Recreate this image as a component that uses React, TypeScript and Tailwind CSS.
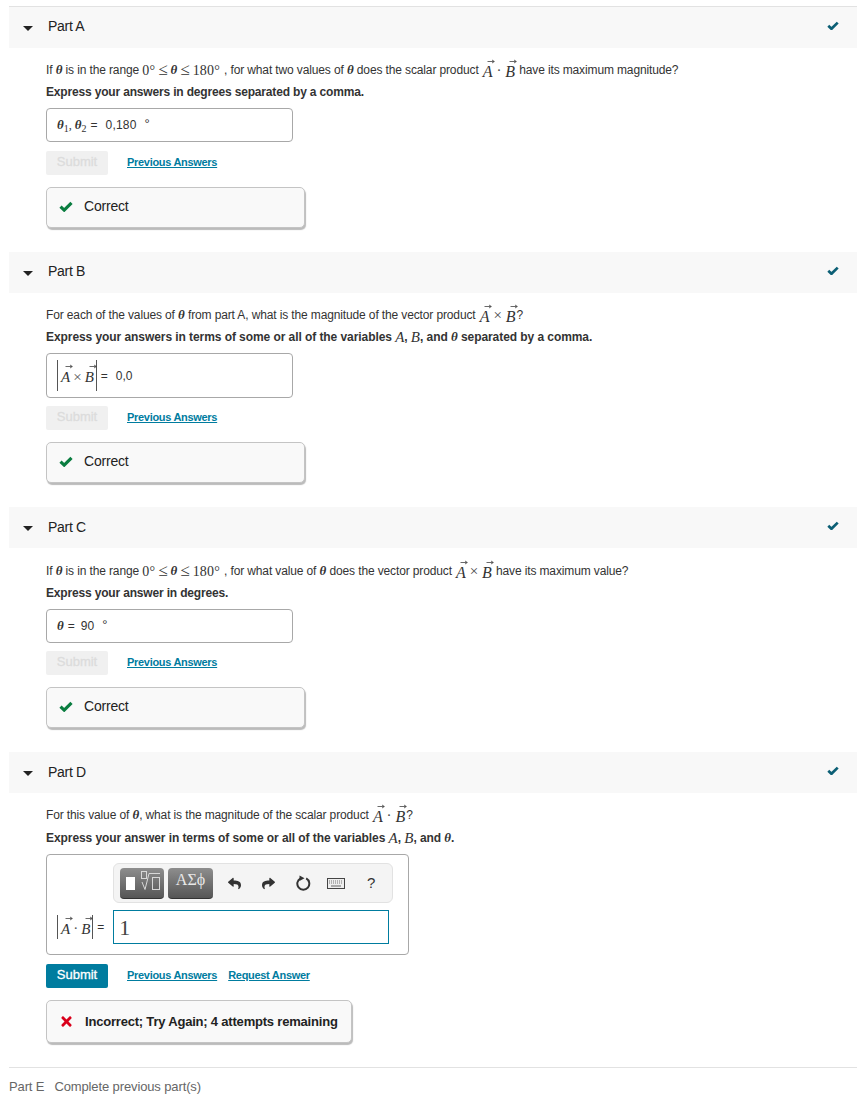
import React from "react";
import { FaTimes, FaReply, FaShare } from "react-icons/fa";

const Vec = ({ c, small }: { c: string; small?: boolean }) => (
  <span
    className={
      small
        ? "relative inline-block font-['Liberation_Serif',serif] italic text-[15px] leading-[12px] text-[#333]"
        : "relative inline-block font-['Liberation_Serif',serif] italic text-[16px] leading-[12px] text-[#333] mx-[1px] mt-[3px]"
    }
  >
    {c}
    <svg className="absolute left-[4px] top-[-7px]" width="8" height="5" viewBox="0 0 8 5">
      <path d="M0.5 2.5H7M5 1L7.4 2.5L5 4" fill="none" stroke="#444" strokeWidth="0.8" />
    </svg>
  </span>
);
const Th = () => <span className="font-['Liberation_Serif',serif] italic font-bold text-[13px] tracking-normal text-[#333]">θ</span>;
const V = ({ c }: { c: string }) => <span className="font-['Liberation_Serif',serif] italic font-normal text-[15px] tracking-normal text-[#333]">{c}</span>;
const Op = ({ c, small }: { c: string; small?: boolean }) => (
  <span className={small ? "font-['Liberation_Serif',serif] text-[15px] text-[#555] mx-[3px]" : "font-['Liberation_Serif',serif] text-[15px] text-[#444] mx-[3px]"}>{c}</span>
);

const Range = () => (
  <>
    <span className="font-['Liberation_Serif',serif] text-[14px] tracking-[0.2px]">0°</span>
    <span className="mx-[3px] font-['Liberation_Serif',serif] text-[17px] tracking-normal">≤</span>
    <Th />
    <span className="mx-[3px] font-['Liberation_Serif',serif] text-[17px] tracking-normal">≤</span>
    <span className="font-['Liberation_Serif',serif] text-[14px] tracking-[0.2px] mr-[4px]">180°</span>
  </>
);

const Check = ({ color, w }: { color: string; w: number }) => (
  <svg width={w} height={w * 0.8} viewBox="0 0 14 11" className={color}>
    <path d="M1.5 5.5L5.2 9L12.5 1.8" fill="none" stroke="currentColor" strokeWidth="3.2" />
  </svg>
);

const Header = ({ name, low }: { name: string; low?: boolean }) => (
  <div className="h-[41px] bg-[#f8f8f8] flex items-center pl-[14px] pr-[18px]">
    <svg width="10" height="5" viewBox="0 0 10 5" className="mr-[15px] mt-[1px]">
      <path d="M0 0H10L5 5Z" fill="#222" />
    </svg>
    <span className={low ? "text-[14px] tracking-[-0.3px] text-[#222] flex-1" : "text-[14px] tracking-[-0.3px] text-[#222] flex-1 mt-[-2px]"}>{name}</span>
    <div className="mb-[4px] flex">
      <Check color="text-[#0c5f75]" w={12} />
    </div>
  </div>
);

const Links = ({ req }: { req?: boolean }) => (
  <div className="flex gap-[11px] text-[11px] tracking-[-0.3px] font-bold text-[#007c9f] underline ml-[19px] mt-[-1px]">
    <span>Previous Answers</span>
    {req && <span>Request Answer</span>}
  </div>
);

const Actions = ({ active, req, mt }: { active?: boolean; req?: boolean; mt: string }) => (
  <div className={`flex items-center ${mt}`}>
    <div
      className={
        active
          ? "w-[62px] h-[24px] rounded-[2px] bg-[#007c9f] text-white text-[13px] [-webkit-text-stroke:0.3px] flex items-center justify-center pb-[2px]"
          : "w-[62px] h-[24px] rounded-[2px] bg-[#f0f0f0] text-[#dcdcdc] text-[13px] [-webkit-text-stroke:0.3px] flex items-center justify-center pb-[2px]"
      }
    >
      Submit
    </div>
    <Links req={req} />
  </div>
);

const Correct = ({ mt }: { mt: string }) => (
  <div className={`w-[259px] h-[41px] bg-[#f9f9f9] border border-[#c4c4c4] rounded-[5px] shadow-[1px_2px_1px_#bbb] flex items-center pl-[12px] pb-[2px] ${mt}`}>
    <div className="mr-[11px] flex">
      <Check color="text-[#0a7d40]" w={14} />
    </div>
    <span className="text-[14px] tracking-[-0.2px] text-[#222]">Correct</span>
  </div>
);

const Answer = ({ h, children }: { h: string; children: React.ReactNode }) => (
  <div className={`w-[247px] ${h} border border-[#a8a8a8] rounded-[4px] bg-white flex items-center pl-[10px] text-[12px] text-[#333]`}>
    {children}
  </div>
);

const Abs = ({ op, h }: { op: string; h: string }) => (
  <span className={`inline-flex items-center border-l border-r border-[#555] ${h} pl-[3px] pr-[2px] pt-[3px]`}>
    <Vec c="A" small />
    <Op c={op} small />
    <Vec c="B" small />
  </span>
);

const Q = ({ children }: { children: React.ReactNode }) => (
  <div className="text-[12px] tracking-[-0.13px] text-[#333] h-[16px] flex items-center whitespace-pre">{children}</div>
);
const E = ({ children, cls }: { children: React.ReactNode; cls?: string }) => (
  <div className={`text-[12px] font-bold text-[#333] h-[16px] flex items-center whitespace-pre ${cls ?? "mt-[6px] tracking-[-0.17px]"}`}>{children}</div>
);

const Sub = ({ n }: { n: string }) => (
  <span className="font-['Liberation_Serif',serif] text-[13px]">
    <span className="italic font-bold">θ</span>
    <sub className="text-[10px] not-italic">{n}</sub>
  </span>
);

const TB = ({ w, children }: { w: string; children: React.ReactNode }) => (
  <div className={`${w} h-[31px] rounded-[4px] bg-gradient-to-b from-[#8e8e8e] to-[#565656] border-b border-[#333] flex items-center justify-center`}>
    {children}
  </div>
);

const Deg = () => <span className="ml-[8px] mb-[4px] text-[13px] leading-[13px]">°</span>;

export default function App() {
  return (
    <div className="w-[861px] h-[1107px] bg-white overflow-hidden font-['Liberation_Sans',Arial,sans-serif] pt-[6px] pl-[9px] pr-[4px]">
      <div className="border-t border-[#e2e2e2]" />

      <Header name="Part A" />
      <div className="pl-[37px] pt-[14px] h-[204px]">
        <Q>
          If <Th /> is in the range <Range />, for what two values of <Th /> does the scalar product <Vec c="A" /><Op c="·" /><Vec c="B" /> have its maximum magnitude?
        </Q>
        <E>Express your answers in degrees separated by a comma.</E>
        <div className="mt-[8px]" />
        <Answer h="h-[34px]">
          <Sub n="1" /><span className="font-['Liberation_Serif',serif] mr-[3px]">,</span><Sub n="2" />
          <span className="ml-[4px] mr-[8px]">=</span>
          <span className="tracking-[0.2px]">0,180</span>
          <Deg />
        </Answer>
        <Actions mt="mt-[9px]" />
        <Correct mt="mt-[12px]" />
      </div>

      <Header name="Part B" />
      <div className="pl-[37px] pt-[14px] h-[214px]">
        <Q>
          For each of the values of <Th /> from part A, what is the magnitude of the vector product <Vec c="A" /><Op c="×" /><Vec c="B" />?
        </Q>
        <E cls="mt-[6px] tracking-[-0.07px]">
          Express your answers in terms of some or all of the variables <V c="A" />, <V c="B" />, and <Th /> separated by a comma.
        </E>
        <div className="mt-[8px]" />
        <Answer h="h-[45px]">
          <Abs op="×" h="h-[31px]" />
          <span className="ml-[4px] mr-[8px]">=</span>
          <span>0,0</span>
        </Answer>
        <Actions mt="mt-[8px]" />
        <Correct mt="mt-[12px]" />
      </div>

      <Header name="Part C" low />
      <div className="pl-[37px] pt-[15px] h-[204px]">
        <Q>
          If <Th /> is in the range <Range />, for what value of <Th /> does the vector product <Vec c="A" /><Op c="×" /><Vec c="B" /> have its maximum value?
        </Q>
        <E>Express your answer in degrees.</E>
        <div className="mt-[8px]" />
        <Answer h="h-[34px]">
          <Th />
          <span className="ml-[4px] mr-[6px]">=</span>
          <span>90</span>
          <Deg />
        </Answer>
        <Actions mt="mt-[8px]" />
        <Correct mt="mt-[12px]" />
      </div>

      <Header name="Part D" low />
      <div className="pl-[37px] pt-[14px]">
        <Q>
          For this value of <Th />, what is the magnitude of the scalar product <Vec c="A" /><Op c="·" /><Vec c="B" />?
        </Q>
        <E cls="mt-[7px] tracking-[-0.07px]">
          Express your answer in terms of some or all of the variables <V c="A" />, <V c="B" />, and <Th />.
        </E>
        <div className="mt-[8px] w-[363px] h-[101px] border border-[#a8a8a8] rounded-[4px] bg-white pt-[8px]">
          <div className="ml-[66px] w-[280px] h-[40px] bg-[#f4f4f4] border border-[#e2e2e2] rounded-[6px] flex items-center pl-[6px]">
            <div className="flex gap-[4px]">
              <TB w="w-[44px]">
                <svg width="44" height="31" viewBox="0 0 44 31">
                  <rect x="6" y="10" width="9" height="13" fill="#fff" />
                  <rect x="21.5" y="4.5" width="5" height="7" fill="none" stroke="#d8d8d8" />
                  <path d="M22 15L25 22.5L29 6.5H40" fill="none" stroke="#d8d8d8" />
                  <rect x="32.5" y="10.5" width="7" height="12" fill="none" stroke="#d8d8d8" />
                </svg>
              </TB>
              <TB w="w-[45px]">
                <span className="font-['Liberation_Serif',serif] text-[16px] text-[#e8e8e8] mb-[5px]">ΑΣϕ</span>
              </TB>
            </div>
            <FaReply className="text-[#333] text-[13px] ml-[15px]" />
            <FaShare className="text-[#333] text-[13px] ml-[21px]" />
            <svg width="15" height="16" viewBox="0 0 15 16" className="ml-[21px]">
              <path d="M10.2 3.4A6 6 0 1 1 4.6 3.3" fill="none" stroke="#333" strokeWidth="2" />
              <path d="M3.5 0.5L8.5 3.2L3.5 6Z" fill="#333" />
            </svg>
            <svg width="18" height="11" viewBox="0 0 18 11" className="ml-[16px]">
              <rect x="0.5" y="0.5" width="17" height="10" fill="#eee" stroke="#444" />
              <path d="M2 3H16M2 5H16" stroke="#777" strokeWidth="1" strokeDasharray="1 1" />
              <path d="M4 8H14" stroke="#666" />
            </svg>
            <span className="text-[15px] text-[#333] ml-[22px]">?</span>
          </div>
          <div className="flex items-center mt-[7px] ml-[10px]">
            <Abs op="·" h="h-[24px]" />
            <span className="text-[12px] text-[#333] ml-[4px] mr-[9px]">=</span>
            <div className="w-[276px] h-[34px] border border-[#007c9f] flex items-center pl-[5px] font-['Liberation_Serif',serif] text-[22px] text-[#444]">
              1
            </div>
          </div>
        </div>
        <Actions active req mt="mt-[9px]" />
        <div className="mt-[12px] w-[306px] h-[43px] bg-[#f9f9f9] border border-[#c4c4c4] rounded-[5px] shadow-[1px_2px_1px_#bbb] flex items-center pl-[12px]">
          <FaTimes className="text-[#d9001b] text-[15px] mr-[11px]" />
          <span className="text-[13px] tracking-[-0.2px] font-bold text-[#222]">Incorrect; Try Again; 4 attempts remaining</span>
        </div>
      </div>

      <div className="border-t border-[#e2e2e2] mt-[24px] pt-[9px] text-[13px] tracking-[-0.12px] text-[#666] flex gap-[10px]">
        <span>Part E</span>
        <span>Complete previous part(s)</span>
      </div>
    </div>
  );
}
